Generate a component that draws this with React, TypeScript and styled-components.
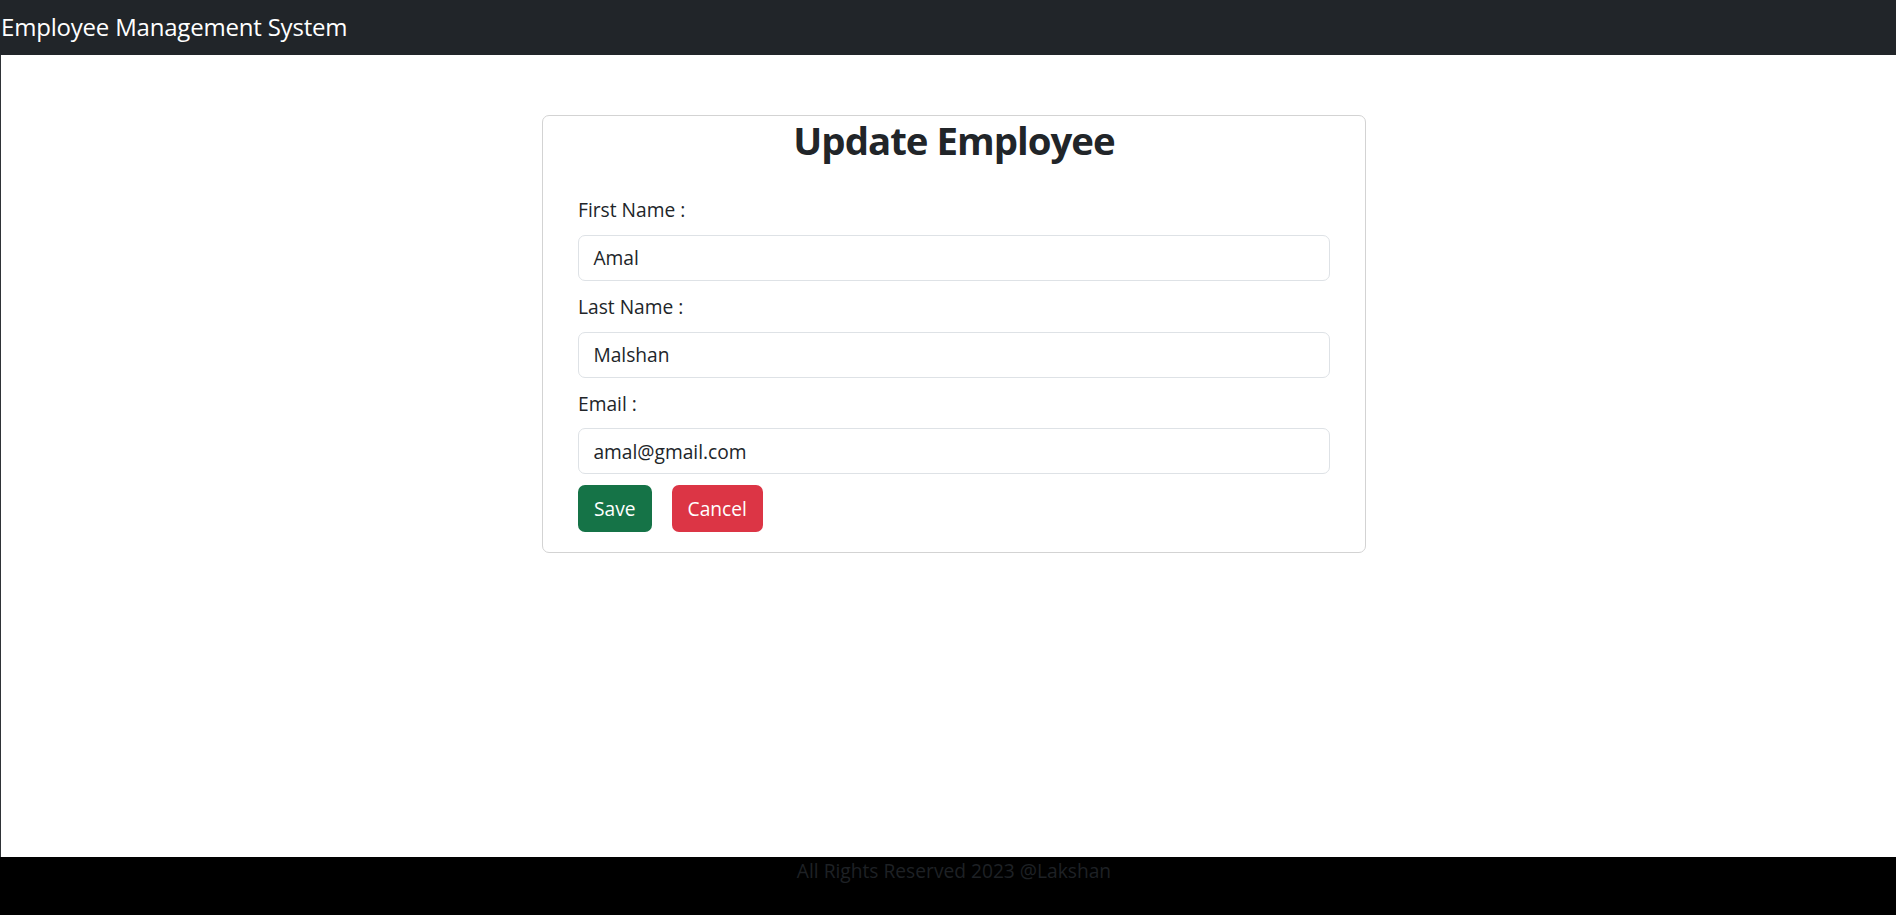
import React from "react";
import styled, { createGlobalStyle } from "styled-components";

const GlobalStyle = createGlobalStyle`
  html, body {
    margin: 0;
    padding: 0;
    background: #ffffff;
  }
  body {
    font-family: "Open Sans", "Noto Sans", "Liberation Sans", sans-serif;
    color: #212529;
  }
  * { box-sizing: border-box; }
`;

const Page = styled.div`
  min-height: 100vh;
  display: flex;
  flex-direction: column;
`;

const NavBar = styled.header`
  height: 55px;
  background: #212529;
  display: flex;
  align-items: center;
  padding-left: 1px;
`;

const Brand = styled.span`
  color: #ffffff;
  font-size: 24px;
  line-height: 1.2;
  letter-spacing: -0.2px;
  white-space: nowrap;
`;

const Main = styled.main`
  flex: 1;
  border-left: 1px solid #2f3337;
  padding-top: 60px;
`;

const Card = styled.section`
  width: 824px;
  margin-left: 541px;
  border: 1px solid #d3d3d3;
  border-radius: 7px;
  padding: 0 35px 20px;
  background: #fff;
`;

const Title = styled.h2`
  margin: 0;
  padding-top: 1px;
  text-align: center;
  font-size: 38.4px;
  line-height: 46px;
  font-weight: 700;
  letter-spacing: -1px;
  color: #212529;
`;

const Form = styled.form`
  display: flex;
  flex-direction: column;
  padding-top: 33px;
`;

const Group = styled.div`
  display: flex;
  flex-direction: column;
  margin-bottom: 12px;
`;

const Label = styled.label`
  font-size: 19.2px;
  line-height: 28.8px;
  color: #212529;
  margin-bottom: 10px;
`;

const Input = styled.input`
  height: 46px;
  width: 100%;
  padding: 0 14.4px;
  font-family: inherit;
  font-size: 19.2px;
  color: #212529;
  border: 1px solid #dee2e6;
  border-radius: 7px;
  background: #fff;
  outline: none;
`;

const Actions = styled.div`
  display: flex;
  gap: 20px;
  margin-top: -1px;
`;

const Button = styled.button<{ $variant: "success" | "danger" }>`
  height: 47px;
  padding: 0 16px;
  font-family: inherit;
  font-size: 19.2px;
  color: #fff;
  border: none;
  border-radius: 7px;
  cursor: pointer;
  background: ${(p) => (p.$variant === "success" ? "#157347" : "#dc3545")};
`;

const Footer = styled.footer`
  height: 58px;
  background: #000;
  text-align: center;
  padding-left: 12px;
  font-size: 19.2px;
  line-height: 28.8px;
  color: #1e2125;
`;

export default function App() {
  return (
    <Page>
      <GlobalStyle />
      <NavBar>
        <Brand>Employee Management System</Brand>
      </NavBar>
      <Main>
        <Card>
          <Title>Update Employee</Title>
          <Form onSubmit={(e) => e.preventDefault()}>
            <Group>
              <Label>First Name :</Label>
              <Input defaultValue="Amal" />
            </Group>
            <Group>
              <Label>Last Name :</Label>
              <Input defaultValue="Malshan" />
            </Group>
            <Group>
              <Label>Email :</Label>
              <Input defaultValue="amal@gmail.com" />
            </Group>
            <Actions>
              <Button type="submit" $variant="success">Save</Button>
              <Button type="button" $variant="danger">Cancel</Button>
            </Actions>
          </Form>
        </Card>
      </Main>
      <Footer>All Rights Reserved 2023 @Lakshan</Footer>
    </Page>
  );
}
